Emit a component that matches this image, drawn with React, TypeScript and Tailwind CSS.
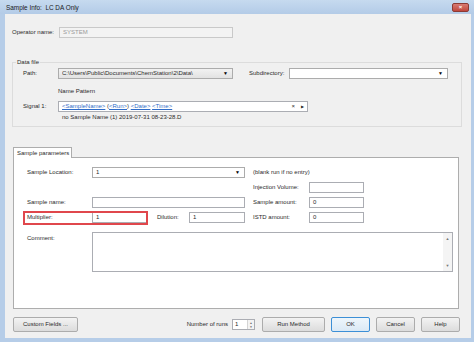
import React from 'react';

const Box: React.FC<{ className?: string; children?: React.ReactNode }> = ({ className = '', children }) => (
  <div className={`h-[11px] border border-[#abadb3] bg-white flex items-center px-[3px] shrink-0 ${className}`}>{children}</div>
);

const Combo: React.FC<{ className?: string; value?: string }> = ({ className = '', value }) => (
  <div className={`h-[11px] border border-[#acacac] flex items-center pl-[3px] pr-[4px] shrink-0 ${className}`}>
    <span className="flex-1 truncate">{value}</span>
    <span className="text-[5px] text-black">▼</span>
  </div>
);

const Button: React.FC<{ className?: string; label: string }> = ({ className = '', label }) => (
  <div
    className={`h-[15px] rounded-[2px] border flex items-center justify-center shrink-0 ${className}`}
  >
    {label}
  </div>
);

const Tok: React.FC<{ children: React.ReactNode }> = ({ children }) => (
  <span className="text-[#2f6cc8] underline">{children}</span>
);

const App: React.FC = () => {
  return (
    <div className="w-[474px] h-[342px] bg-[#b6cde8] flex flex-col whitespace-nowrap font-['Liberation_Sans',Arial,sans-serif] text-[6px] leading-[7px] text-[#2a2a2a]">
      {/* title bar */}
      <div className="h-[14px] shrink-0 flex items-center bg-gradient-to-b from-[#c6daef] to-[#b3cbe7] pl-[6px] pr-[5px]">
        <span className="text-[6.4px] text-[#1a1a1a] mt-[1px]">Sample Info:&nbsp; LC DA Only</span>
        <div className="ml-auto w-[17px] h-[9px] rounded-[2px] bg-gradient-to-b from-[#d77a72] to-[#c0463c] border border-[#8c3a34] flex items-center justify-center text-white text-[6px] leading-none font-bold">
          ×
        </div>
      </div>

      {/* client */}
      <div className="ml-[5px] w-[466px] h-[324px] bg-[#f0f0f0] flex flex-col">
        {/* operator */}
        <div className="mt-[13px] ml-[7px] flex items-center h-[11px]">
          <span className="w-[47px]">Operator name:</span>
          <div className="w-[174px] h-[11px] border border-[#c9c9c9] bg-[#f3f3f3] text-[#9a9a9a] flex items-center px-[3px]">SYSTEM</div>
        </div>

        {/* data file group */}
        <div className="relative mt-[24px] ml-[7px] w-[450px] h-[65px] border border-[#dcdcdc] flex flex-col">
          <span className="absolute -top-[4px] left-[3px] bg-[#f0f0f0] px-[1px]">Data file</span>
          <div className="mt-[5px] pl-[10px] flex items-center h-[11px]">
            <span className="w-[35px]">Path:</span>
            <Combo className="w-[175px] bg-gradient-to-b from-[#f2f2f2] to-[#e2e2e2]" value="C:\Users\Public\Documents\ChemStation\2\Data\" />
            <span className="ml-[16px] w-[40px]">Subdirectory:</span>
            <Combo className="w-[159px] bg-white" />
          </div>
          <div className="mt-[9px] pl-[45px] h-[7px]">Name Pattern</div>
          <div className="mt-[6px] pl-[10px] flex items-center h-[11px]">
            <span className="w-[35px]">Signal 1:</span>
            <Box className="w-[250px]">
              <span className="flex-1">
                <Tok>&lt;SampleName&gt;</Tok> (<Tok>&lt;Run&gt;</Tok>) <Tok>&lt;Date&gt;</Tok> <Tok>&lt;Time&gt;</Tok>
              </span>
              <span className="text-[6px] mr-[6px]">×</span>
              <span className="text-[4px]">▶</span>
            </Box>
          </div>
          <div className="mt-[2px] pl-[49px] h-[7px]">no Sample Name (1) 2019-07-31 08-23-28.D</div>
        </div>

        {/* tab */}
        <div className="mt-[20px] ml-[8px] flex flex-col">
          <div className="relative z-10 -mb-px w-[59px] h-[11px] border border-b-0 border-[#adadad] bg-white flex items-center pl-[3px]">
            Sample parameters
          </div>
          <div className="w-[446px] h-[152px] border border-[#adadad] bg-white flex flex-col pl-[13px]">
            <div className="mt-[9px] flex items-center h-[11px]">
              <span className="w-[65px]">Sample Location:</span>
              <Combo className="w-[153px] bg-white" value="1" />
              <span className="ml-[8px]">(blank run if no entry)</span>
            </div>
            <div className="mt-[4px] flex items-center h-[11px]">
              <span className="ml-[226px] w-[56px]">Injection Volume:</span>
              <Box className="w-[55px]" />
            </div>
            <div className="mt-[4px] flex items-center h-[11px]">
              <span className="w-[65px]">Sample name:</span>
              <Box className="w-[153px]" />
              <span className="ml-[8px] w-[56px]">Sample amount:</span>
              <Box className="w-[55px]">0</Box>
            </div>
            <div className="mt-[4px] flex items-center h-[11px]">
              <div className="relative flex items-center h-[11px]">
                <span className="w-[65px]">Multiplier:</span>
                <Box className="w-[56px]">1</Box>
                <div className="absolute -left-[4px] -top-[1px] w-[125px] h-[14px] border-2 border-[#e0474c]" />
              </div>
              <span className="ml-[9px] w-[32px]">Dilution:</span>
              <Box className="w-[56px]">1</Box>
              <span className="ml-[8px] w-[56px]">ISTD amount:</span>
              <Box className="w-[55px]">0</Box>
            </div>
            <div className="mt-[9px] flex items-start">
              <span className="w-[65px] pt-[3px]">Comment:</span>
              <div className="w-[361px] h-[40px] border border-[#abadb3] bg-white flex justify-end">
                <div className="w-[9px] h-full bg-[#f4f4f4] flex flex-col items-center justify-between py-[2px] text-[4px] text-[#777]">
                  <span>▲</span>
                  <span>▼</span>
                </div>
              </div>
            </div>
          </div>
        </div>

        {/* buttons */}
        <div className="mt-[8px] ml-[8px] mr-[11px] flex items-center h-[15px]">
          <Button className="w-[65px] border-[#acacac] bg-gradient-to-b from-[#f3f3f3] to-[#dcdcdc]" label="Custom Fields ..." />
          <span className="ml-auto mr-[4px]">Number of runs</span>
          <div className="w-[23px] h-[11px] border border-[#abadb3] bg-white flex items-center">
            <span className="flex-1 pl-[2px]">1</span>
            <div className="w-[7px] h-full border-l border-[#d4d4d4] bg-[#f3f3f3] flex flex-col items-center justify-center text-[3px] leading-[4px] text-[#666]">
              <span>▲</span>
              <span>▼</span>
            </div>
          </div>
          <Button className="ml-[7px] w-[63px] border-[#acacac] bg-gradient-to-b from-[#f3f3f3] to-[#dcdcdc]" label="Run Method" />
          <Button className="ml-[6px] w-[39px] border-[#3c8fd6] bg-gradient-to-b from-[#eef6fc] to-[#dbe9f5]" label="OK" />
          <Button className="ml-[6px] w-[39px] border-[#acacac] bg-gradient-to-b from-[#f3f3f3] to-[#dcdcdc]" label="Cancel" />
          <Button className="ml-[6px] w-[39px] border-[#acacac] bg-gradient-to-b from-[#f3f3f3] to-[#dcdcdc]" label="Help" />
        </div>
      </div>
    </div>
  );
};

export default App;
